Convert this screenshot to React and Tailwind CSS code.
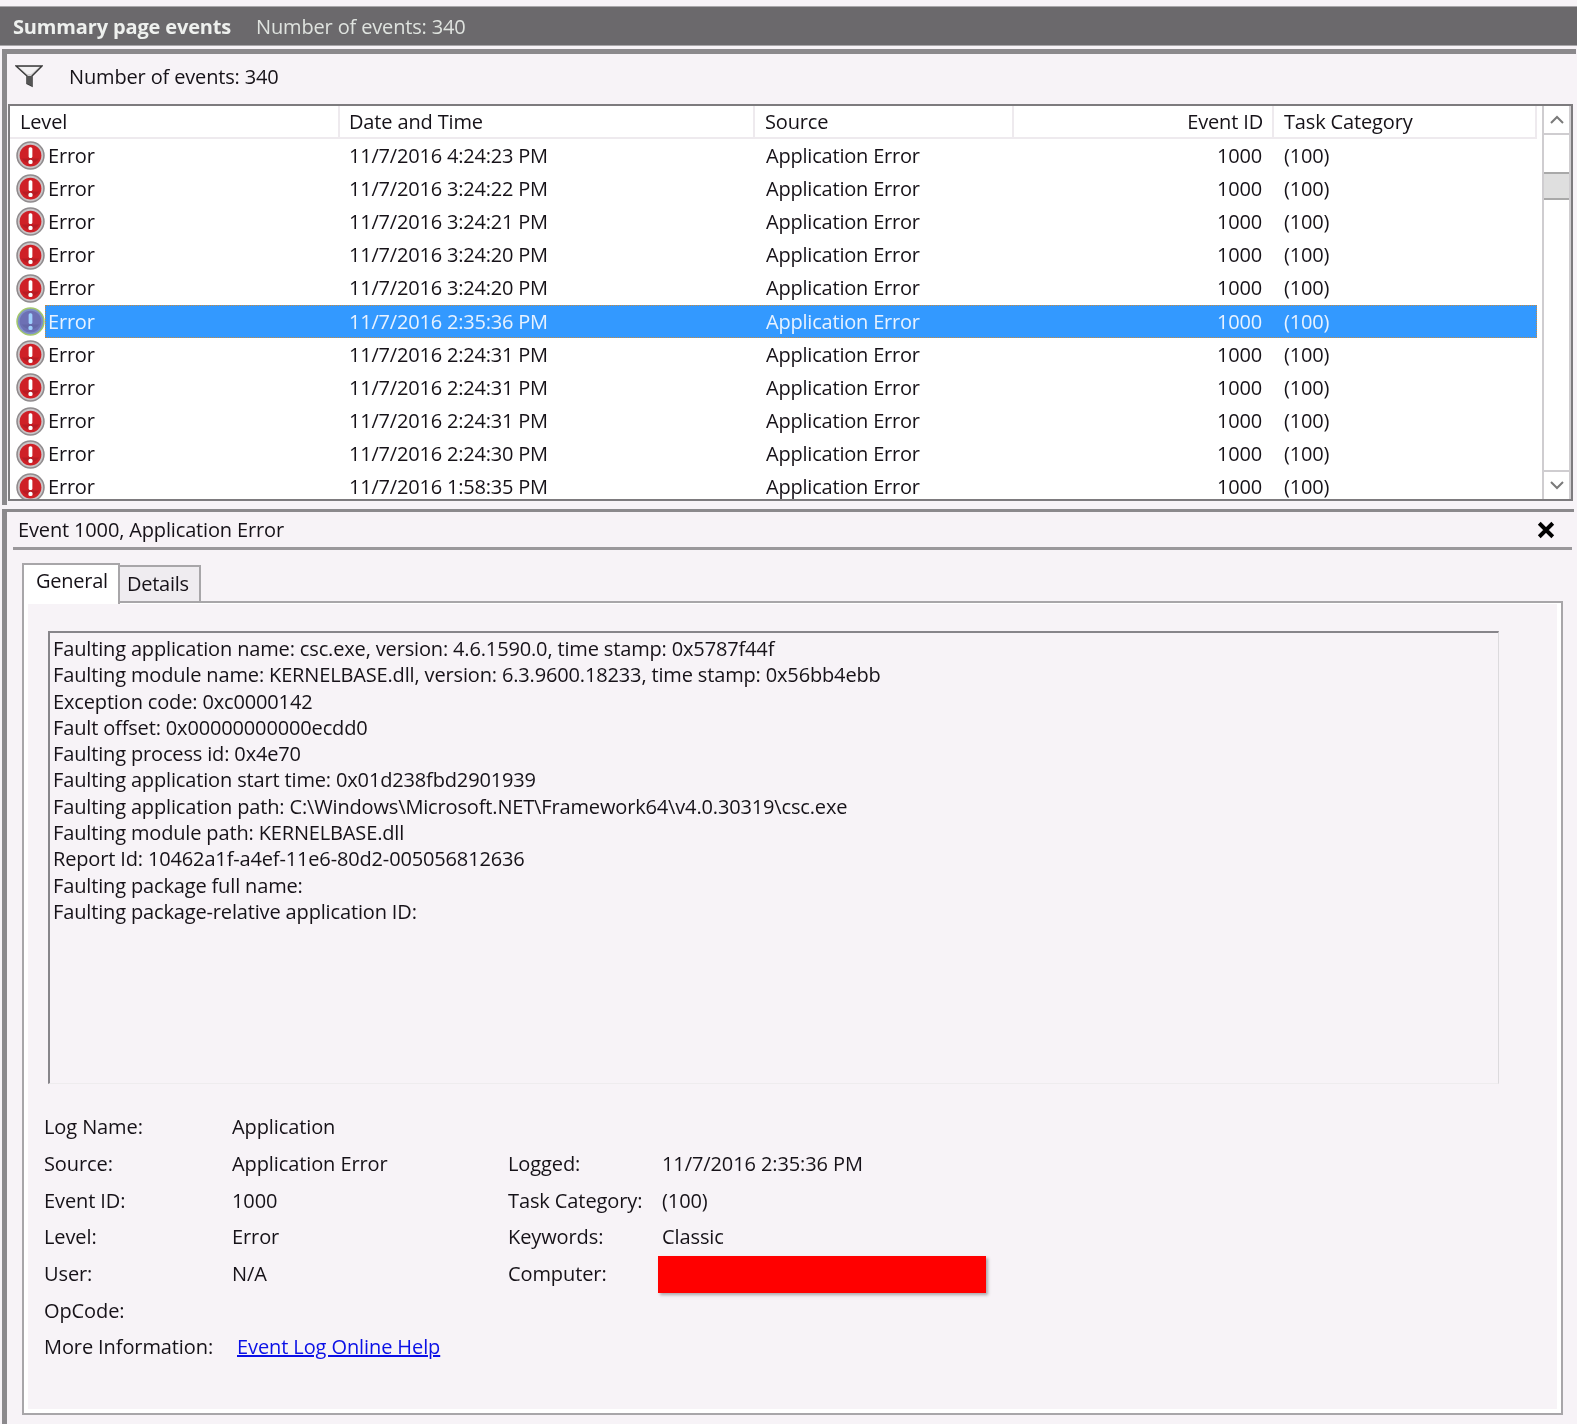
const rows = [
  "11/7/2016 4:24:23 PM","11/7/2016 3:24:22 PM","11/7/2016 3:24:21 PM","11/7/2016 3:24:20 PM","11/7/2016 3:24:20 PM",
  "11/7/2016 2:35:36 PM","11/7/2016 2:24:31 PM","11/7/2016 2:24:31 PM","11/7/2016 2:24:31 PM","11/7/2016 2:24:30 PM","11/7/2016 1:58:35 PM",
];
const lines = [
  "Faulting application name: csc.exe, version: 4.6.1590.0, time stamp: 0x5787f44f",
  "Faulting module name: KERNELBASE.dll, version: 6.3.9600.18233, time stamp: 0x56bb4ebb",
  "Exception code: 0xc0000142",
  "Fault offset: 0x00000000000ecdd0",
  "Faulting process id: 0x4e70",
  "Faulting application start time: 0x01d238fbd2901939",
  "Faulting application path: C:\\Windows\\Microsoft.NET\\Framework64\\v4.0.30319\\csc.exe",
  "Faulting module path: KERNELBASE.dll",
  "Report Id: 10462a1f-a4ef-11e6-80d2-005056812636",
  "Faulting package full name:",
  "Faulting package-relative application ID:",
];

function LevelIcon({ selected }) {
  return (
    <svg width="29" height="29" viewBox="0 0 28 28" className="shrink-0">
      <circle cx="14" cy="14" r="13" fill={selected ? "#7f90c8" : "#c9c5c7"} stroke={selected ? "#a4c86c" : "#8f8b8d"} strokeWidth="1.5" />
      <circle cx="14" cy="14" r="10.5" fill={selected ? "#6d70b4" : "#cf2027"} />
      <path d="M5.5 17 A10.5 10.5 0 0 0 22.5 17 Z" fill={selected ? "#6468a8" : "#b81c24"} />
      <rect x="12.2" y="6" width="3.6" height="10.5" rx="1.5" fill={selected ? "#9fd0ff" : "#fff"} />
      <circle cx="14" cy="20.2" r="2.1" fill={selected ? "#9fd0ff" : "#fff"} />
    </svg>
  );
}

function Row({ time, selected }) {
  return (
    <div className="h-[33.2px] flex items-center shrink-0 text-[20px] leading-none tracking-[-0.2px]">
      <div className="w-[35px] shrink-0 pl-[6px] flex"><LevelIcon selected={selected} /></div>
      <div className={`flex flex-1 h-full items-center ${selected ? "bg-[#3399ff] text-[#e8f2ff] outline-1 outline-dotted -outline-offset-1 outline-[#c98a3c]" : "text-[#161218]"}`}>
        <div className="w-[301px] shrink-0 pl-[3px]">Error</div>
        <div className="w-[416px] shrink-0 pl-[3px]">{time}</div>
        <div className="w-[259px] shrink-0 pl-[4px]">Application Error</div>
        <div className="w-[241px] shrink-0 text-right">1000</div>
        <div className="pl-[22px]">(100)</div>
      </div>
    </div>
  );
}

function Chevron({ up }) {
  return (
    <svg width="14" height="9" viewBox="0 0 14 9">
      <path d={up ? "M1 8 L7 2 L13 8" : "M1 1 L7 7 L13 1"} fill="none" stroke="#7a7a7a" strokeWidth="2" />
    </svg>
  );
}

function Field({ label, value, width }) {
  return (
    <div className="flex h-[36.7px] items-center">
      <div className={`${width} shrink-0`}>{label}</div>
      <div>{value}</div>
    </div>
  );
}

export default function App() {
  return (
    <div className="w-[1577px] h-[1424px] overflow-hidden bg-[#f7f3f7] pt-[6px] text-[#161218] blur-[0.4px]" style={{ fontFamily: '"Open Sans", "Noto Sans", sans-serif' }}>
      <div className="h-[40px] border-y border-[#a9a7aa] bg-[#6b696c] flex items-center pl-[13px] pt-[1px] text-[20px] text-[#eef0ee] tracking-[-0.15px]">
        <span className="font-bold w-[243px]">Summary page events</span>
        <span className="text-[#dfe3df]">Number of events: 340</span>
      </div>

      <div className="mt-[3px] h-[456px] border-l-[5px] border-t-[5px] border-[#8b898c] ml-[2px] mr-[1px] flex flex-col">
        <div className="h-[50px] shrink-0 flex items-center pl-[8px] pb-[4px] text-[20px] tracking-[-0.15px]">
          <svg width="28" height="24" viewBox="0 0 28 24" className="-mt-[3px]">
            <path d="M1 2 H27 L17 12 V22 L12 19.5 V12 Z" fill="#d4d2d4" stroke="#3a3a3a" strokeWidth="1.5" />
            <path d="M4 3 H24 L16 10 H12 Z" fill="#f2f0f2" />
            <path d="M12 12 V19.5 L17 22 V12 Z" fill="#555" />
          </svg>
          <span className="ml-[26px]">Number of events: 340</span>
        </div>
        <div className="h-[397px] ml-[1px] mr-[3px] border-2 border-[#7d7b7e] bg-white flex overflow-hidden">
          <div className="flex-1 flex flex-col min-w-0 overflow-hidden">
            <div className="h-[33px] shrink-0 flex items-center text-[20px] tracking-[-0.15px] border-b-2 border-[#eeeaee]">
              <div className="w-[330px] shrink-0 pl-[10px] h-full flex items-center border-r-2 border-[#eeeaee]">Level</div>
              <div className="w-[415px] shrink-0 pl-[9px] h-full flex items-center border-r-2 border-[#eeeaee]">Date and Time</div>
              <div className="w-[259px] shrink-0 pl-[10px] h-full flex items-center border-r-2 border-[#eeeaee]">Source</div>
              <div className="w-[260px] shrink-0 pr-[9px] h-full flex items-center justify-end border-r-2 border-[#eeeaee]">Event ID</div>
              <div className="flex-1 pl-[10px] h-full flex items-center border-r-2 border-[#eeeaee]">Task Category</div>
            </div>
            {rows.map((t, i) => <Row key={i} time={t} selected={i === 5} />)}
          </div>
          <div className="w-[34px] shrink-0 pl-[5px] flex">
            <div className="w-[29px] flex flex-col border-x-2 border-[#cfcdd0]">
              <div className="h-[29px] shrink-0 flex items-center justify-center border-b-2 border-[#cfcdd0]"><Chevron up /></div>
              <div className="h-[37px] shrink-0" />
              <div className="h-[28px] shrink-0 bg-[#dfdfdf] border-y-2 border-[#a9a9a9]" />
              <div className="flex-1" />
              <div className="h-[29px] shrink-0 flex items-center justify-center border-t-2 border-[#cfcdd0]"><Chevron /></div>
            </div>
          </div>
        </div>
      </div>

      <div className="mt-[4px] h-[918px] border-l-[5px] border-t-[3px] border-[#8b898c] ml-[2px] mr-[3px] flex flex-col">
        <div className="h-[38px] shrink-0 ml-[6px] mr-[2px] flex items-center justify-between border-b-[3px] border-[#9a989b] pl-[5px] pr-[17px] text-[20px] tracking-[-0.15px]">
          <span>Event 1000, Application Error</span>
          <svg width="18" height="18" viewBox="0 0 16 16"><path d="M2 2 L14 14 M14 2 L2 14" stroke="#000" strokeWidth="3.5" /></svg>
        </div>
        <div className="h-[51px] shrink-0 flex items-end pl-[15px] text-[20px] tracking-[-0.25px]">
          <div className="w-[98px] h-[41px] bg-white border-2 border-b-0 border-[#a8a6a9] flex items-start pt-[1px] pl-[12px] relative z-10 -mb-[3px]">General</div>
          <div className="w-[81px] h-[36px] bg-[#efecf0] border-2 border-l-0 border-b-0 border-[#a8a6a9] flex items-center pl-[7px]">Details</div>
        </div>
        <div className="ml-[15px] w-[1541px] h-[814px] border-2 border-[#a8a6a9] bg-white px-[4px] pt-[1px] pb-[4px]">
          <div className="bg-[#f7f3f7] h-full pl-[20px] pt-[27px]">
            <div className="w-[1451px] h-[453px] border-2 border-r border-b border-[#87858a] border-r-[#dcdadd] border-b-[#eeecee] pl-[3px] pt-[3px] text-[20px] leading-[26.3px] tracking-[-0.15px] whitespace-pre">
              {lines.map((l, i) => <div key={i}>{l}</div>)}
            </div>
            <div className="mt-[25px] -ml-[4px] text-[20px] tracking-[-0.1px] flex">
              <div className="w-[464px] shrink-0">
                <Field label="Log Name:" value="Application" width="w-[188px]" />
                <Field label="Source:" value="Application Error" width="w-[188px]" />
                <Field label="Event ID:" value="1000" width="w-[188px]" />
                <Field label="Level:" value="Error" width="w-[188px]" />
                <Field label="User:" value="N/A" width="w-[188px]" />
                <Field label="OpCode:" value="" width="w-[188px]" />
                <Field label="More Information:" value={<a className="ml-[5px] text-[#0a10e6] underline" href="#">Event Log Online Help</a>} width="w-[188px]" />
              </div>
              <div className="pt-[36.7px]">
                <Field label="Logged:" value="11/7/2016 2:35:36 PM" width="w-[154px]" />
                <Field label="Task Category:" value="(100)" width="w-[154px]" />
                <Field label="Keywords:" value="Classic" width="w-[154px]" />
                <div className="flex h-[36.7px] items-center">
                  <div className="w-[150px] shrink-0">Computer:</div>
                  <div className="w-[328px] h-[37px] bg-[#ff0000] shadow-[2px_2px_3px_#aaa6aa]" />
                </div>
              </div>
            </div>
          </div>
        </div>
      </div>
    </div>
  );
}
